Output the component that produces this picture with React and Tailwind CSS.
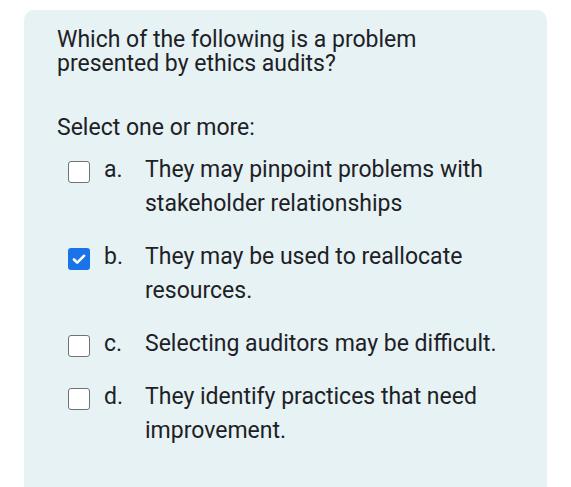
import React from 'react';

const options = [
  { letter: 'a.', text: ['They may pinpoint problems with', 'stakeholder relationships'], checked: false },
  { letter: 'b.', text: ['They may be used to reallocate', 'resources.'], checked: true },
  { letter: 'c.', text: ['Selecting auditors may be difficult.'], checked: false },
  { letter: 'd.', text: ['They identify practices that need', 'improvement.'], checked: false },
];

const Box = ({ checked }) =>
  checked ? (
    <div className="w-[22px] h-[22px] rounded-[3px] bg-[#1a73e8] flex items-center justify-center">
      <svg width="16" height="16" viewBox="0 0 16 16" fill="none">
        <path d="M3 8.5l3.2 3.2L13 4.8" stroke="white" strokeWidth="2.6" strokeLinecap="round" strokeLinejoin="round" />
      </svg>
    </div>
  ) : (
    <div className="w-[22px] h-[22px] rounded-[3px] bg-white border-[1.5px] border-[#6f7378]" />
  );

export default function App() {
  return (
    <div className="min-h-[487px] bg-white pt-[10px] px-[24px]" style={{ fontFamily: 'Roboto, "Liberation Sans", sans-serif' }}>
      <div className="bg-[#e7f2f5] rounded-t-[10px] min-h-[477px] pl-[33px] pr-4 pt-[18px] text-[#1d2125]">
        <p className="text-[23px] leading-[24px]">
          Which of the following is a problem
          <br />
          presented by ethics audits?
        </p>
        <p className="text-[23px] leading-[28px] mt-[38px]">Select one or more:</p>
        <div className="flex flex-col gap-[19px] mt-[11px] ml-[11px]">
          {options.map((o) => (
            <div key={o.letter} className="flex text-[23px] leading-[34px]">
              <div className="w-[36px] pt-[8px] shrink-0">
                <Box checked={o.checked} />
              </div>
              <div className="w-[41px] shrink-0">{o.letter}</div>
              <div>
                {o.text.map((t) => (
                  <div key={t}>{t}</div>
                ))}
              </div>
            </div>
          ))}
        </div>
      </div>
    </div>
  );
}
